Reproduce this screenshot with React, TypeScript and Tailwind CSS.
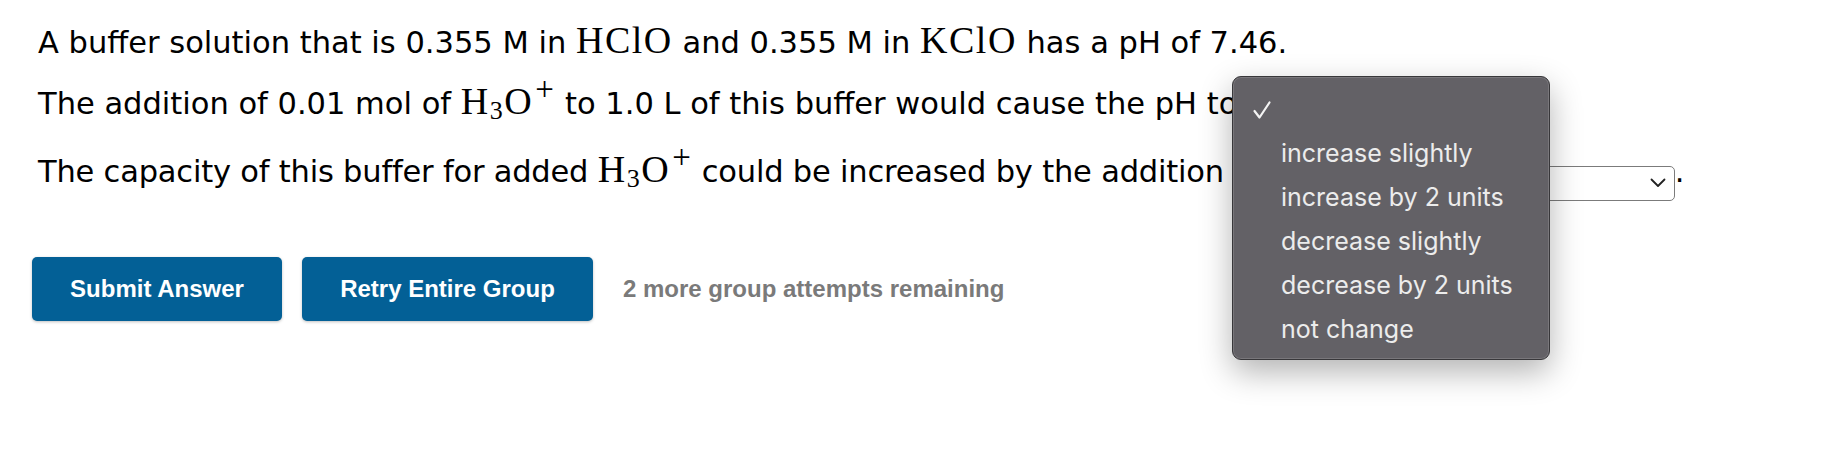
const bodyFont = { fontFamily: '"DejaVu Sans", Verdana, sans-serif' };

function M({ children }: { children: React.ReactNode }) {
  return (
    <span className="font-['Liberation_Serif',serif] text-[38px] leading-none tracking-[1.5px]">{children}</span>
  );
}

function H3O() {
  return (
    <M>
      H<span className="text-[26px] leading-[0] align-[-5px]">3</span>O
      <span className="text-[33px] leading-[0] align-[14px] ml-[2px]">+</span>
    </M>
  );
}

function Select({ width }: { width: string }) {
  return (
    <span
      className={`inline-flex items-center justify-end align-[-6px] ${width} h-[35px] ml-[8px] border border-[#7b7b7b] rounded-[5px] bg-white pr-[8px]`}
    >
      <svg width="16" height="10" viewBox="0 0 16 10" fill="none">
        <path d="M1.5 1.5 L8 8 L14.5 1.5" stroke="#222" strokeWidth="1.8" strokeLinecap="round" strokeLinejoin="round" />
      </svg>
    </span>
  );
}

const options = ['increase slightly', 'increase by 2 units', 'decrease slightly', 'decrease by 2 units', 'not change'];

export default function App() {
  return (
    <div className="relative w-[1831px] h-[467px] bg-white overflow-hidden">
      <div className="pl-[38px] pt-[21px] text-black text-[30.5px]" style={bodyFont}>
        <div className="h-[40px] leading-[40px] whitespace-nowrap">
          A buffer solution that is 0.355 M in <M>HClO</M> and 0.355 M in <M>KClO</M> has a pH of 7.46.
        </div>
        <div className="h-[40px] leading-[40px] mt-[21px] whitespace-nowrap">
          The addition of 0.01 mol of <H3O /> to 1.0 L of this buffer would cause the pH to
          <Select width="w-[260px]" />.
        </div>
        <div className="h-[40px] leading-[40px] mt-[28px] whitespace-nowrap tracking-[-0.2px]">
          The capacity of this buffer for added <H3O /> could be increased by the addition
          <Select width="w-[443px]" />.
        </div>
      </div>

      <div className="flex items-center gap-[20px] pl-[32px] mt-[67px] font-['Liberation_Sans',Arial,sans-serif] font-bold text-[24px]">
        <button className="w-[250px] h-[64px] rounded-[5px] bg-[#036096] text-white shadow-[0_1px_3px_rgba(0,0,0,0.25)]">
          Submit Answer
        </button>
        <button className="w-[291px] h-[64px] rounded-[5px] bg-[#036096] text-white shadow-[0_1px_3px_rgba(0,0,0,0.25)]">
          Retry Entire Group
        </button>
        <span className="ml-[10px] text-[#7a7a7a]">2 more group attempts remaining</span>
      </div>

      <div className="absolute left-[1232px] top-[76px] w-[318px] h-[284px] rounded-[9px] bg-[#636166] border border-[#38373a] shadow-[0_12px_32px_rgba(0,0,0,0.3),inset_0_0_0_1px_rgba(255,255,255,0.14)] pt-[11px] font-['Inter',sans-serif] text-[25px] text-[#ececec]">
        <div className="h-[44px] flex items-center pl-[19px]">
          <svg width="20" height="20" viewBox="0 0 20 20" fill="none">
            <path d="M2.5 11 L7.5 17.5 L17.5 2.5" stroke="#f4f4f4" strokeWidth="2.2" strokeLinecap="round" strokeLinejoin="round" />
          </svg>
        </div>
        {options.map((o) => (
          <div key={o} className="h-[44px] flex items-center pl-[48px]">
            {o}
          </div>
        ))}
      </div>
    </div>
  );
}
